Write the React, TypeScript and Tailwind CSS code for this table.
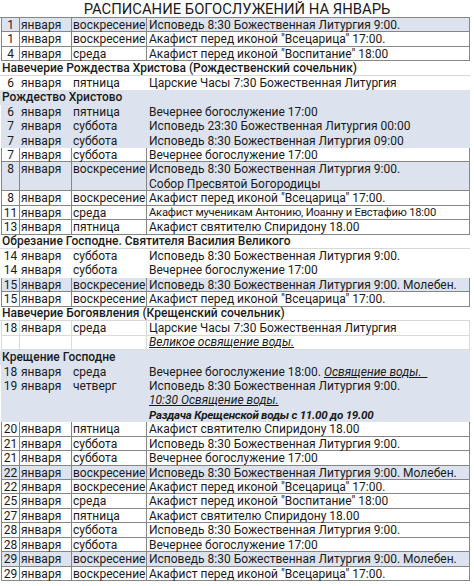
import React from "react";

type Row =
  | { k: "h"; text: string; bg?: boolean; b?: "d" | "f" | "n" }
  | {
      k: "r";
      n?: string;
      m?: string;
      d?: string;
      s: React.ReactNode;
      s2?: React.ReactNode;
      bg?: boolean;
      v?: "d" | "f" | "n";
      b?: "d" | "f" | "n";
      small?: boolean;
    };

const I = (t: string) => <span className="italic underline underline-offset-1">{t}</span>;

const rows: Row[] = [
  { k: "r", n: "1", m: "января", d: "воскресение", s: "Исповедь 8:30 Божественная Литургия 9:00.", bg: true, v: "d", b: "d" },
  { k: "r", n: "1", m: "января", d: "воскресение", s: 'Акафист перед иконой "Всецарица" 17:00.', v: "d", b: "d" },
  { k: "r", n: "4", m: "января", d: "среда", s: 'Акафист перед иконой "Воспитание" 18:00', v: "d", b: "d" },
  { k: "h", text: "Навечерие Рождества Христова (Рождественский сочельник)", b: "f" },
  { k: "r", n: "6", m: "января", d: "пятница", s: "Царские Часы 7:30 Божественная Литургия", v: "n", b: "d" },
  { k: "h", text: "Рождество Христово", bg: true, b: "n" },
  { k: "r", n: "6", m: "января", d: "пятница", s: "Вечернее богослужение 17:00", bg: true, v: "n", b: "n" },
  { k: "r", n: "7", m: "января", d: "суббота", s: "Исповедь 23:30 Божественная Литургия 00:00", bg: true, v: "n", b: "n" },
  { k: "r", n: "7", m: "января", d: "суббота", s: "Исповедь 8:30 Божественная Литургия 09:00", bg: true, v: "n", b: "d" },
  { k: "r", n: "7", m: "января", d: "суббота", s: "Вечернее богослужение 17:00", v: "d", b: "d" },
  { k: "r", n: "8", m: "января", d: "воскресение", s: "Исповедь 8:30 Божественная Литургия 9:00.", s2: "Собор Пресвятой Богородицы", bg: true, v: "d", b: "d" },
  { k: "r", n: "8", m: "января", d: "воскресение", s: 'Акафист перед иконой "Всецарица" 17:00.', v: "d", b: "d" },
  { k: "r", n: "11", m: "января", d: "среда", s: "Акафист мученикам Антонию, Иоанну и Евстафию 18:00", v: "d", b: "d", small: true },
  { k: "r", n: "13", m: "января", d: "пятница", s: "Акафист святителю Спиридону 18.00", v: "d", b: "d" },
  { k: "h", text: "Обрезание Господне. Святителя Василия Великого", b: "f" },
  { k: "r", n: "14", m: "января", d: "суббота", s: "Исповедь 8:30 Божественная Литургия 9:00.", v: "n", b: "f" },
  { k: "r", n: "14", m: "января", d: "суббота", s: "Вечернее богослужение 17:00", v: "n", b: "d" },
  { k: "r", n: "15", m: "января", d: "воскресение", s: "Исповедь 8:30 Божественная Литургия 9:00. Молебен.", bg: true, v: "d", b: "d" },
  { k: "r", n: "15", m: "января", d: "воскресение", s: 'Акафист перед иконой "Всецарица" 17:00.', v: "d", b: "d" },
  { k: "h", text: "Навечерие Богоявления (Крещенский сочельник)", b: "f" },
  { k: "r", n: "18", m: "января", d: "среда", s: "Царские Часы 7:30 Божественная Литургия", v: "f", b: "f" },
  { k: "r", s: I("Великое освящение воды."), v: "f", b: "d" },
  { k: "h", text: "Крещение Господне", bg: true, b: "n" },
  {
    k: "r", n: "18", m: "января", d: "среда",
    s: <>Вечернее богослужение 18:00. <span className="italic underline underline-offset-1">Освящение воды.&nbsp;&nbsp;</span></>,
    bg: true, v: "n", b: "n",
  },
  { k: "r", n: "19", m: "января", d: "четверг", s: "Исповедь 8:30 Божественная Литургия 9:00.", bg: true, v: "n", b: "n" },
  { k: "r", s: I("10:30 Освящение воды."), bg: true, v: "n", b: "n" },
  { k: "r", s: <span className="italic font-bold text-[11.6px] tracking-[-0.25px]">Раздача Крещенской воды с 11.00 до 19.00</span>, bg: true, v: "n", b: "d" },
  { k: "r", n: "20", m: "января", d: "пятница", s: "Акафист святителю Спиридону 18.00", v: "d", b: "d" },
  { k: "r", n: "21", m: "января", d: "суббота", s: "Исповедь 8:30 Божественная Литургия 9:00.", v: "d", b: "d" },
  { k: "r", n: "21", m: "января", d: "суббота", s: "Вечернее богослужение 17:00", v: "d", b: "d" },
  { k: "r", n: "22", m: "января", d: "воскресение", s: "Исповедь 8:30 Божественная Литургия 9:00. Молебен.", bg: true, v: "d", b: "d" },
  { k: "r", n: "22", m: "января", d: "воскресение", s: 'Акафист перед иконой "Всецарица" 17:00.', v: "d", b: "d" },
  { k: "r", n: "25", m: "января", d: "среда", s: 'Акафист перед иконой "Воспитание" 18:00', v: "d", b: "d" },
  { k: "r", n: "27", m: "января", d: "пятница", s: "Акафист святителю Спиридону 18.00", v: "d", b: "d" },
  { k: "r", n: "28", m: "января", d: "суббота", s: "Исповедь 8:30 Божественная Литургия 9:00.", v: "d", b: "d" },
  { k: "r", n: "28", m: "января", d: "суббота", s: "Вечернее богослужение 17:00", v: "d", b: "d" },
  { k: "r", n: "29", m: "января", d: "воскресение", s: "Исповедь 8:30 Божественная Литургия 9:00. Молебен.", bg: true, v: "d", b: "d" },
  { k: "r", n: "29", m: "января", d: "воскресение", s: 'Акафист перед иконой "Всецарица" 17:00.', v: "d", b: "d" },
];

const bCls = (b?: "d" | "f" | "n") =>
  b === "d" ? "border-b border-[#868686]" : b === "f" ? "border-b border-[#d8d8d8]" : "border-b border-transparent";
const vCls = (v?: "d" | "f" | "n") =>
  v === "d" ? "border-r border-[#868686]" : v === "f" ? "border-r border-[#dadada]" : "border-r border-transparent";

export default function App() {
  return (
    <div
      className="w-[474px] h-[586px] bg-white text-[#1a1a1a] text-[12px] leading-[14px] overflow-hidden"
      style={{ fontFamily: "Roboto, 'Noto Sans', sans-serif" }}
    >
      <div className="h-[18px] flex items-center justify-center border-b border-[#868686] w-[470px] text-[14.8px] pt-[1px]">
        <span className="pl-[4px]">РАСПИСАНИЕ БОГОСЛУЖЕНИЙ НА ЯНВАРЬ</span>
      </div>
      <div className="w-[470px]">
        {rows.map((r, i) => {
          if (r.k === "h") {
            return (
              <div
                key={i}
                className={`h-[14.44px] flex items-center pl-[2px] font-medium ${r.bg ? "bg-[#dce3ee]" : ""} ${bCls(r.b)}`}
              >
                {r.text}
              </div>
            );
          }
          const tall = !!r.s2;
          const vc = vCls(r.v);
          const left = r.v === "d" ? "border-l border-[#868686]" : r.v === "f" ? "border-l border-[#dadada]" : "border-l border-transparent";
          const al = tall ? "items-start" : "items-center";
          return (
            <div
              key={i}
              className={`${tall ? "h-[28.88px]" : "h-[14.44px]"} grid grid-cols-[18px_52px_75px_1fr] ml-[1px] ${left} ${r.bg ? "bg-[#dce3ee]" : ""} ${bCls(r.b)}`}
            >
              <div className={`${vc} flex ${al} justify-center`}>{r.n ?? ""}</div>
              <div className={`${vc} pl-[1px] flex ${al}`}>{r.m ?? ""}</div>
              <div className={`${vc} pl-[1px] flex ${al}`}>{r.d ?? ""}</div>
              <div className={`${vc} pl-[2px] flex flex-col justify-center whitespace-nowrap overflow-hidden ${r.small ? "text-[11.2px] tracking-[-0.2px]" : ""}`}>
                <div className="leading-[14px]">{r.s}</div>
                {r.s2 && <div className="leading-[14px] mt-[0.4px]">{r.s2}</div>}
              </div>
            </div>
          );
        })}
      </div>
    </div>
  );
}
